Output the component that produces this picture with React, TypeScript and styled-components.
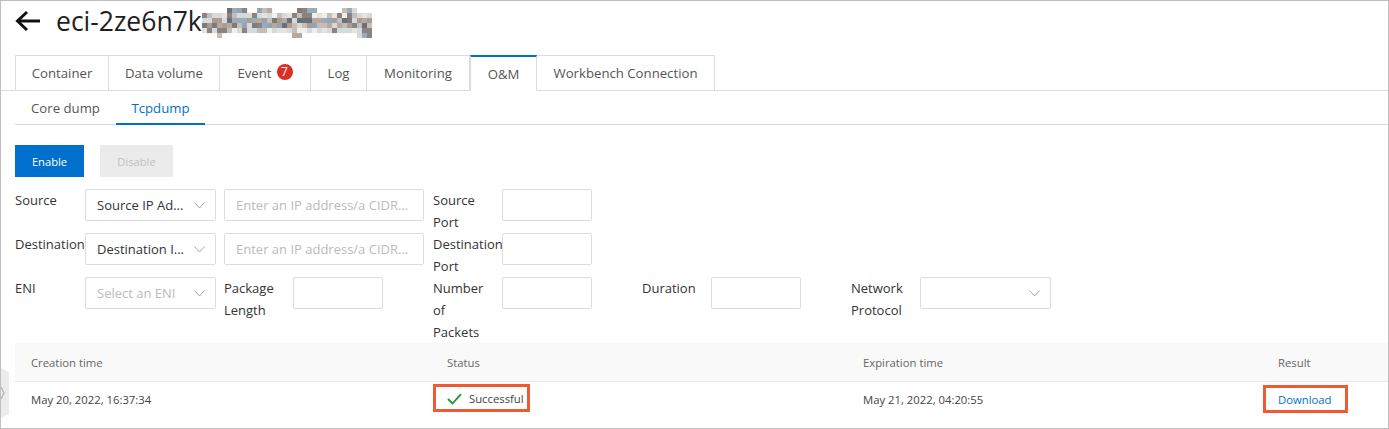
import React from 'react';
import styled, { createGlobalStyle } from 'styled-components';

const Global = createGlobalStyle`
  html, body { margin: 0; padding: 0; background: #fff; }
  body { font-family: "Open Sans", "Noto Sans", "Liberation Sans", sans-serif; color: #333; }
  * { box-sizing: border-box; }
`;

const Page = styled.div`
  position: relative;
  width: 1389px;
  height: 429px;
  border: 1px solid #bfbfbf;
  overflow: hidden;
  background: #fff;
`;

const Header = styled.header`
  display: flex;
  align-items: center;
  height: 54px;
  padding: 0 0 14px 14px;
`;

const BackIcon = styled.svg`
  width: 26px;
  height: 22px;
  margin-right: 15px;
  flex: none;
`;

const Title = styled.h1`
  margin: 0;
  font-size: 26.5px;
  font-weight: 500;
  line-height: 40px;
  color: #1f1f1f;
`;

const Mosaic = styled.svg`
  width: 170px;
  height: 30px;
  flex: none;
  margin-top: 4px;
`;

const TabStrip = styled.nav`
  display: flex;
  height: 36px;
  padding-left: 14px;
  border-bottom: 1px solid #dcdcdc;
`;

const Tab = styled.div<{ $w: number; $active?: boolean; $first?: boolean }>`
  display: flex;
  align-items: center;
  justify-content: center;
  gap: 5px;
  width: ${p => p.$w}px;
  height: ${p => (p.$active ? 36 : 35)}px;
  font-size: 13.2px;
  color: #555;
  background: #fff;
  border-top: ${p => (p.$active ? '2px solid #0070cc' : '1px solid #dcdcdc')};
  border-right: 1px solid #dcdcdc;
  border-left: ${p => (p.$first || p.$active ? '1px solid #dcdcdc' : '0')};
`;

const Badge = styled.span`
  display: inline-flex;
  align-items: center;
  justify-content: center;
  width: 16px;
  height: 16px;
  margin-top: -3px;
  border-radius: 50%;
  background: #d93026;
  color: #fff;
  font-size: 12px;
  line-height: 16px;
`;

const SubTabs = styled.div`
  display: flex;
  height: 34px;
  margin-left: 14px;
  border-bottom: 1px solid #dcdcdc;
`;

const SubTab = styled.div<{ $w: number; $active?: boolean }>`
  display: flex;
  align-items: center;
  justify-content: center;
  width: ${p => p.$w}px;
  height: 34px;
  padding-top: 2px;
  font-size: 13.2px;
  color: ${p => (p.$active ? '#0070cc' : '#555')};
  border-bottom: 2px solid ${p => (p.$active ? '#0070cc' : 'transparent')};
`;

const Toolbar = styled.div`
  display: flex;
  gap: 16px;
  padding: 20px 0 12px 14px;
`;

const Button = styled.button<{ $primary?: boolean; $w: number }>`
  width: ${p => p.$w}px;
  height: 32px;
  padding: 0;
  border: 0;
  font-family: inherit;
  font-size: 11.2px;
  font-weight: 400;
  background: ${p => (p.$primary ? '#0070cc' : '#ebebeb')};
  color: ${p => (p.$primary ? '#fff' : '#c1c1c1')};
`;

const FormRow = styled.div`
  display: flex;
  align-items: flex-start;
  padding-left: 14px;
`;

const Label = styled.label<{ $w: number }>`
  flex: none;
  width: ${p => p.$w}px;
  padding-right: 12px;
  font-size: 13px;
  line-height: 22px;
  color: #333;
`;

const Control = styled.input<{ $w: number; $gap?: number }>`
  flex: none;
  width: ${p => p.$w}px;
  height: 32px;
  margin-right: ${p => p.$gap ?? 0}px;
  padding: 0 5px 0 11px;
  border: 1px solid #dcdcdc;
  border-radius: 2px;
  outline: 0;
  font-family: inherit;
  font-size: 13px;
  color: #333;
  background: #fff;
  &::placeholder { color: #bbb; opacity: 1; }
`;

const SelectBox = styled.div<{ $w: number; $gap?: number; $muted?: boolean }>`
  flex: none;
  display: flex;
  align-items: center;
  justify-content: space-between;
  width: ${p => p.$w}px;
  height: 32px;
  margin-right: ${p => p.$gap ?? 0}px;
  padding: 0 11px;
  border: 1px solid #dcdcdc;
  border-radius: 2px;
  font-size: 13px;
  color: ${p => (p.$muted ? '#bbb' : '#333')};
`;

const SelectText = styled.span`
  white-space: nowrap;
`;

const Chevron = styled.svg`
  width: 11px;
  height: 7px;
  flex: none;
  margin-right: -1px;
`;

const Table = styled.div`
  margin-left: 14px;
`;

const HeadRow = styled.div`
  display: grid;
  grid-template-columns: 416px 416px 415px 1fr;
  align-items: center;
  height: 39px;
  padding-left: 16px;
  background: #f9f9f9;
  border-bottom: 1px solid #e8e8e8;
  font-size: 11.3px;
  color: #666;
`;

const BodyRow = styled(HeadRow)`
  height: 35px;
  background: #fff;
  border-bottom: 0;
  color: #444;
`;

const Highlight = styled.span<{ $link?: boolean }>`
  position: relative;
  display: inline-flex;
  align-items: center;
  gap: 7px;
  color: ${p => (p.$link ? '#0070cc' : '#444')};
  &::after {
    content: '';
    position: absolute;
    left: ${p => (p.$link ? -15 : -14)}px;
    right: ${p => (p.$link ? -16 : -6)}px;
    top: -7px;
    bottom: -6px;
    border: 3px solid #f05a32;
  }
`;

const CheckIcon = styled.svg`
  width: 15px;
  height: 12px;
`;

const Handle = styled.div`
  position: absolute;
  left: 0;
  top: 367px;
  display: flex;
  align-items: center;
  width: 8px;
  height: 50px;
  background: #ececec;
  clip-path: polygon(0 0, 100% 8%, 100% 92%, 0 100%);
`;

const HandleIcon = styled.svg`
  width: 4px;
  height: 14px;
`;

const palette = ['#b5aaa0', '#96a3b0', '#7f7a78', '#a89c93', '#6d6f77', '#9aabb9', '#8a8380', '#c6beb6', '#d5dade', '#e6e3de', '#f1efea', '#6f7379'];
const sparse: Record<number, number[]> = {
  0: [5, 6, 7, 8, 11, 12, 13, 19, 20, 21, 22, 28, 29, 30],
  5: [3, 18, 19, 31, 32, 33],
};
const cells: { x: number; y: number; c: string }[] = [];
for (let r = 0; r < 6; r++) {
  for (let c = 0; c < 34; c++) {
    if (sparse[r] && !sparse[r].includes(c)) continue;
    const n = Math.abs(Math.sin(c * 12.9898 + r * 78.233) * 43758.5453) % 1;
    const light = r === 1 || r === 4;
    const idx = light ? 6 + Math.floor(n * 5) : Math.floor(n * 9);
    cells.push({ x: c * 5, y: r * 5, c: palette[idx] });
  }
}

const chevron = (
  <Chevron viewBox="0 0 11 7" fill="none" stroke="#a8a8a8" strokeWidth="1">
    <path d="M0.5 0.5 L5.5 6 L10.5 0.5" />
  </Chevron>
);

export default function App() {
  return (
    <Page>
      <Global />
      <Header>
        <BackIcon viewBox="0 0 26 22" fill="none" stroke="#111" strokeWidth="3">
          <path d="M25 11 H3" />
          <path d="M12 2 L2.5 11 L12 20" />
        </BackIcon>
        <Title>eci-2ze6n7k</Title>
        <Mosaic viewBox="0 0 170 30" aria-hidden="true">
          {cells.map((m, i) => (
            <rect key={i} x={m.x} y={m.y} width={5.1} height={5.1} fill={m.c} />
          ))}
        </Mosaic>
      </Header>
      <TabStrip>
        <Tab $w={94} $first>Container</Tab>
        <Tab $w={111}>Data volume</Tab>
        <Tab $w={91}>Event <Badge>7</Badge></Tab>
        <Tab $w={56}>Log</Tab>
        <Tab $w={103}>Monitoring</Tab>
        <Tab $w={67} $active>O&amp;M</Tab>
        <Tab $w={178}>Workbench Connection</Tab>
      </TabStrip>
      <SubTabs>
        <SubTab $w={101}>Core dump</SubTab>
        <SubTab $w={89} $active>Tcpdump</SubTab>
      </SubTabs>
      <Toolbar>
        <Button $primary $w={69}>Enable</Button>
        <Button $w={73}>Disable</Button>
      </Toolbar>
      <FormRow>
        <Label $w={70}>Source</Label>
        <SelectBox $w={131} $gap={8}><SelectText>Source IP Ad...</SelectText>{chevron}</SelectBox>
        <Control $w={200} $gap={9} placeholder="Enter an IP address/a CIDR..." />
        <Label $w={69}>Source Port</Label>
        <Control $w={90} />
      </FormRow>
      <FormRow>
        <Label $w={70}>Destination</Label>
        <SelectBox $w={131} $gap={8}><SelectText>Destination I...</SelectText>{chevron}</SelectBox>
        <Control $w={200} $gap={9} placeholder="Enter an IP address/a CIDR..." />
        <Label $w={69}>Destination Port</Label>
        <Control $w={90} />
      </FormRow>
      <FormRow>
        <Label $w={70}>ENI</Label>
        <SelectBox $w={131} $gap={8} $muted><SelectText>Select an ENI</SelectText>{chevron}</SelectBox>
        <Label $w={69}>Package Length</Label>
        <Control $w={90} $gap={50} />
        <Label $w={69}>Number of Packets</Label>
        <Control $w={90} $gap={50} />
        <Label $w={69}>Duration</Label>
        <Control $w={90} $gap={50} />
        <Label $w={69}>Network Protocol</Label>
        <SelectBox $w={131}><span />{chevron}</SelectBox>
      </FormRow>
      <Table>
        <HeadRow>
          <span>Creation time</span>
          <span>Status</span>
          <span>Expiration time</span>
          <span>Result</span>
        </HeadRow>
        <BodyRow>
          <span>May 20, 2022, 16:37:34</span>
          <span>
            <Highlight>
              <CheckIcon viewBox="0 0 15 12" fill="none" stroke="#1a9a2b" strokeWidth="1.8">
                <path d="M1 6 L5.5 10.5 L14 1.2" />
              </CheckIcon>
              Successful
            </Highlight>
          </span>
          <span>May 21, 2022, 04:20:55</span>
          <span><Highlight $link>Download</Highlight></span>
        </BodyRow>
      </Table>
      <Handle>
        <HandleIcon viewBox="0 0 4 14" fill="none" stroke="#b5b5b5" strokeWidth="1.4">
          <path d="M0 1 L3 7 L0 13" />
        </HandleIcon>
      </Handle>
    </Page>
  );
}
